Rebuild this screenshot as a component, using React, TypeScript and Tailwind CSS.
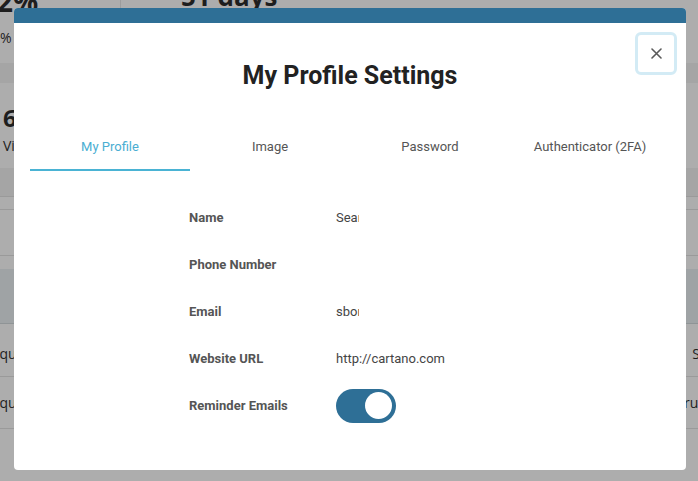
import React from 'react';

const tabs = ['My Profile', 'Image', 'Password', 'Authenticator (2FA)'];

const fields = [
  { label: 'Name', value: 'Sean', clip: true },
  { label: 'Phone Number', value: '' },
  { label: 'Email', value: 'sborden@cartano.com', clip: true },
  { label: 'Website URL', value: 'http://cartano.com' },
];

const Backdrop: React.FC = () => (
  <div className="w-full h-full flex flex-col text-[#1e1e1e]" style={{ fontFamily: '"Open Sans", sans-serif' }}>
    {/* top stat cards */}
    <div className="h-[63px] flex">
      <div className="w-[124px] border-r border-[#9d9d9d] flex flex-col -ml-[3px]">
        <div className="text-[28px] font-bold leading-[28px] -mt-[13px]">2%</div>
        <div className="text-[14px] leading-[18px] mt-[14px] ml-[3px]">% Active</div>
      </div>
      <div className="pl-[60px]">
        <div className="text-[26px] font-bold leading-[28px] -mt-[18px]">51 days</div>
      </div>
    </div>
    <div className="h-[20px] bg-[#a5a5a5]" />
    <div className="h-[85px] flex flex-col pl-[3px]">
      <div className="text-[24px] font-bold leading-[28px] mt-[21px]">6</div>
      <div className="text-[14px] leading-[18px] mt-[5px]">Visits</div>
    </div>
    <div className="h-[29px] bg-[#a5a5a5] border-b border-[#9a9a9a]" />
    <div className="h-[13px] border-b border-[#9a9a9a]" />
    <div className="h-[46px] border-b border-[#9a9a9a]" />
    <div className="h-[13px]" />
    <div className="h-[55px] bg-[#9fa3a5] border-b border-[#8f9496]" />
    <div className="h-[53px] border-b border-[#9a9a9a] flex items-center justify-between text-[14px] pt-[6px]">
      <span className="-ml-[17px]">Request</span>
      <span className="mr-[-2px]">S</span>
    </div>
    <div className="h-[52px] border-b border-[#9a9a9a] flex items-center justify-between text-[14px]">
      <span className="-ml-[17px]">Request</span>
      <span className="mr-[-12px]">rust</span>
    </div>
  </div>
);

const Toggle: React.FC<{ on: boolean }> = ({ on }) => (
  <div
    className={`w-[60px] h-[34px] rounded-full flex items-center px-[4px] ${
      on ? 'bg-[#2e6f96] justify-end' : 'bg-[#cccccc] justify-start'
    }`}
  >
    <div className="w-[27px] h-[27px] rounded-full bg-white" />
  </div>
);

export default function App() {
  return (
    <div className="relative w-[698px] h-[481px] overflow-hidden bg-[#adadad]">
      <Backdrop />

      {/* modal */}
      <div
        className="absolute left-[14px] top-[8px] w-[672px] h-[462px] bg-white rounded-[4px] overflow-hidden flex flex-col"
        style={{ fontFamily: 'Roboto, "Liberation Sans", sans-serif' }}
      >
        <div className="h-[15px] bg-[#2e6f96] shrink-0" />

        <button className="absolute top-[24px] right-[9px] w-[42px] h-[43px] border-[3px] border-[#d3ebf5] rounded-[6px] flex items-center justify-center">
          <svg width="11" height="11" viewBox="0 0 11 11">
            <path d="M1 1L10 10M10 1L1 10" stroke="#5a5a5a" strokeWidth="1.6" strokeLinecap="round" />
          </svg>
        </button>

        <h2 className="mt-[38px] text-center text-[25px] leading-[30px] font-bold text-[#222222]">
          My Profile Settings
        </h2>

        {/* tabs */}
        <div className="mt-[34px] px-[16px] flex">
          {tabs.map((tab, i) => (
            <div
              key={tab}
              className={`flex-1 h-[46px] flex items-center justify-center text-[13px] border-b-2 ${
                i === 0 ? 'text-[#4aaed2] border-[#4ab3d4]' : 'text-[#555555] border-transparent'
              }`}
            >
              {tab}
            </div>
          ))}
        </div>

        {/* form */}
        <div className="mt-[23px] pl-[175px] flex flex-col">
          {fields.map((f) => (
            <div key={f.label} className="h-[47px] flex items-center text-[13px]">
              <div className="w-[147px] font-bold text-[#555555]">{f.label}</div>
              <div className={`text-[#444444] whitespace-nowrap ${f.clip ? 'w-[23px] overflow-hidden' : ''}`}>
                {f.value}
              </div>
            </div>
          ))}
          <div className="h-[47px] flex items-center text-[13px]">
            <div className="w-[147px] font-bold text-[#555555]">Reminder Emails</div>
            <Toggle on />
          </div>
        </div>
      </div>
    </div>
  );
}
